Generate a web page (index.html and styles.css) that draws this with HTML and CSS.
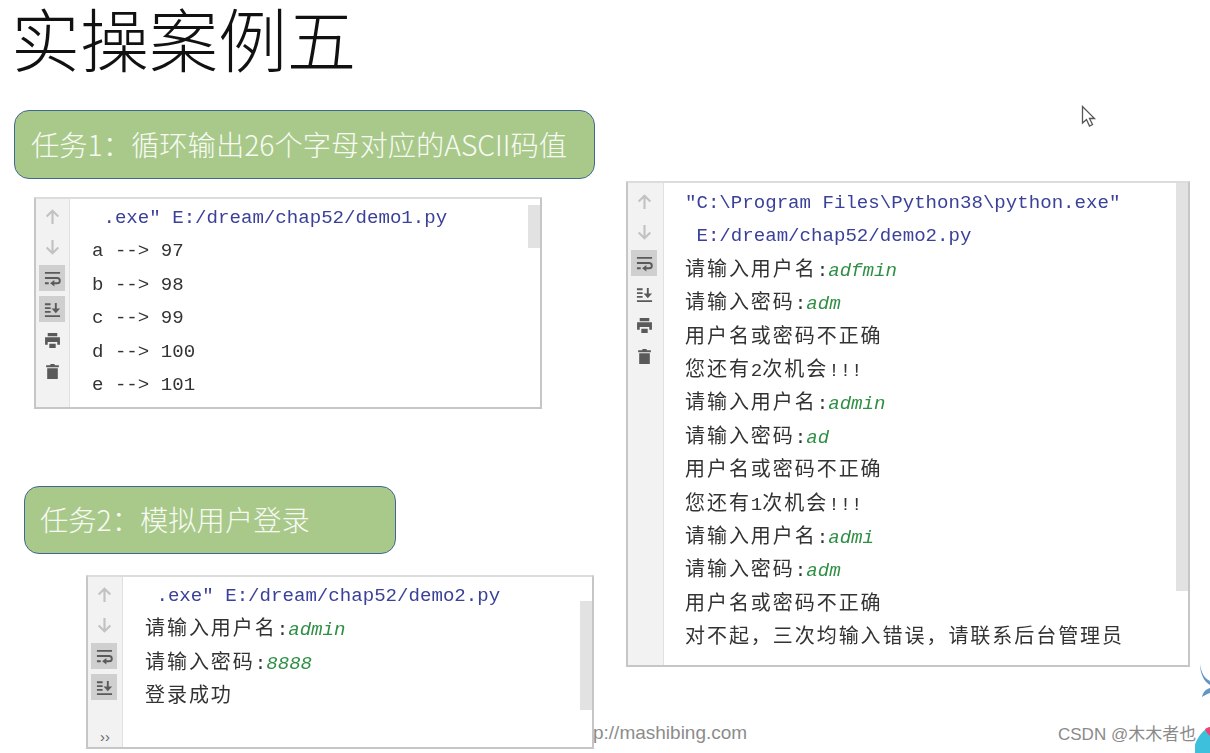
FILE: index.html
```html
<!DOCTYPE html>
<html lang="zh-CN">
<head>
<meta charset="utf-8">
<title>实操案例五</title>
<link rel="stylesheet" href="styles.css">
</head>
<body>
<svg class="defs" width="0" height="0" aria-hidden="true">
  <symbol id="i-up" viewBox="0 0 16 16"><path d="M8 15V3M2.500 8 8 2.500 13.500 8" fill="none" stroke="currentColor" stroke-width="2"/></symbol>
  <symbol id="i-down" viewBox="0 0 16 16"><path d="M8 1v12M2.500 8 8 13.500 13.500 8" fill="none" stroke="currentColor" stroke-width="2"/></symbol>
  <symbol id="i-wrap" viewBox="0 0 18 16"><path d="M1 2h16M1 7.500h13a2.700 2.700 0 0 1 0 5.500H9M1 13h4" fill="none" stroke="currentColor" stroke-width="2"/><path d="M11 9.500v7L6.500 13z" fill="currentColor"/></symbol>
  <symbol id="i-end" viewBox="0 0 18 16"><path d="M1 2.500h6M1 6.500h6M1 10.500h6M1 15h16M12.500 1v7" fill="none" stroke="currentColor" stroke-width="2"/><path d="M8 7h9l-4.500 5z" fill="currentColor"/></symbol>
  <symbol id="i-print" viewBox="0 0 16 16"><path d="M3.500 1h9v3h-9zM1 5h14v7h-2.500V9.500h-9V12H1zM5 11h6v4H5z" fill="currentColor"/></symbol>
  <symbol id="i-trash" viewBox="0 0 16 16"><path d="M6 1h4v1h4v2H2V2h4zM3 5h10v10H3z" fill="currentColor"/></symbol>
</svg>

<main class="slide">
  <h1 class="title">实操案例五</h1>

  <div class="pill pill-one">任务1：循环输出26个字母对应的ASCII码值</div>
  <div class="pill pill-two">任务2：模拟用户登录</div>

  <section class="console console-one">
    <div class="side">
      <span class="btn"><svg class="ic"><use href="#i-up"/></svg></span>
      <span class="btn"><svg class="ic"><use href="#i-down"/></svg></span>
      <span class="btn on"><svg class="ic dark"><use href="#i-wrap"/></svg></span>
      <span class="btn on"><svg class="ic dark"><use href="#i-end"/></svg></span>
      <span class="btn"><svg class="ic dark"><use href="#i-print"/></svg></span>
      <span class="btn"><svg class="ic dark"><use href="#i-trash"/></svg></span>
    </div>
    <div class="out">
      <div class="line cmd"> .exe" E:/dream/chap52/demo1.py</div>
      <div class="line">a --&gt; 97</div>
      <div class="line">b --&gt; 98</div>
      <div class="line">c --&gt; 99</div>
      <div class="line">d --&gt; 100</div>
      <div class="line">e --&gt; 101</div>
    </div>
    <div class="thumb thumb-one"></div>
  </section>

  <section class="console console-two">
    <div class="side">
      <span class="btn"><svg class="ic"><use href="#i-up"/></svg></span>
      <span class="btn"><svg class="ic"><use href="#i-down"/></svg></span>
      <span class="btn on"><svg class="ic dark"><use href="#i-wrap"/></svg></span>
      <span class="btn on"><svg class="ic dark"><use href="#i-end"/></svg></span>
      <span class="more">››</span>
    </div>
    <div class="out">
      <div class="line cmd"> .exe" E:/dream/chap52/demo2.py</div>
      <div class="line"><span class="zh">请输入用户名</span>:<i class="in">admin</i></div>
      <div class="line"><span class="zh">请输入密码</span>:<i class="in">8888</i></div>
      <div class="line"><span class="zh">登录成功</span></div>
    </div>
    <div class="thumb thumb-two"></div>
  </section>

  <section class="console console-three">
    <div class="side">
      <span class="btn"><svg class="ic"><use href="#i-up"/></svg></span>
      <span class="btn"><svg class="ic"><use href="#i-down"/></svg></span>
      <span class="btn on"><svg class="ic dark"><use href="#i-wrap"/></svg></span>
      <span class="btn"><svg class="ic dark"><use href="#i-end"/></svg></span>
      <span class="btn"><svg class="ic dark"><use href="#i-print"/></svg></span>
      <span class="btn"><svg class="ic dark"><use href="#i-trash"/></svg></span>
    </div>
    <div class="out">
      <div class="line cmd">"C:\Program Files\Python38\python.exe"</div>
      <div class="line cmd"> E:/dream/chap52/demo2.py</div>
      <div class="line"><span class="zh">请输入用户名</span>:<i class="in">adfmin</i></div>
      <div class="line"><span class="zh">请输入密码</span>:<i class="in">adm</i></div>
      <div class="line"><span class="zh">用户名或密码不正确</span></div>
      <div class="line"><span class="zh">您还有</span>2<span class="zh">次机会</span>!!!</div>
      <div class="line"><span class="zh">请输入用户名</span>:<i class="in">admin</i></div>
      <div class="line"><span class="zh">请输入密码</span>:<i class="in">ad</i></div>
      <div class="line"><span class="zh">用户名或密码不正确</span></div>
      <div class="line"><span class="zh">您还有</span>1<span class="zh">次机会</span>!!!</div>
      <div class="line"><span class="zh">请输入用户名</span>:<i class="in">admi</i></div>
      <div class="line"><span class="zh">请输入密码</span>:<i class="in">adm</i></div>
      <div class="line"><span class="zh">用户名或密码不正确</span></div>
      <div class="line"><span class="zh">对不起，三次均输入错误，请联系后台管理员</span></div>
    </div>
    <div class="thumb thumb-three"></div>
  </section>

  <div class="url">p://mashibing.com</div>
  <div class="credit">CSDN @木木者也</div>

  <svg class="cursor" viewBox="0 0 16 24" aria-hidden="true"><path d="M1.500 1.500v16.500l4-3.500 3 6.500 3-1.500-3-6h5z" fill="#fff" stroke="#555" stroke-width="1.300"/></svg>
  <svg class="deco" viewBox="0 0 15 90" aria-hidden="true">
    <path d="M5 1c1 8 4 14 10 17v4C9 19 5 10 5 1zM15 25c-4 1-7 4-8 9 3-2 5-3 8-4z" fill="#6296c4"/>
    <path d="M-2 90c2-13 8-22 17-26v26z" fill="#3cc0dc"/>
    <path d="M10 66c2-1 3-2 5-2v9c-2-2-4-4-5-7z" fill="#f0436e"/>
  </svg>
</main>
</body>
</html>
```
FILE: styles.css
```css
html, body {
  margin: 0;
  padding: 0;
  background: #fff;
}

.defs {
  position: absolute;
}

.slide {
  position: relative;
  width: 1210px;
  height: 753px;
  overflow: hidden;
  background: #fff;
  font-family: "Noto Sans CJK SC", sans-serif;
}

.title {
  margin: 0;
  padding: 0 0 0 11px;
  font-size: 69px;
  font-weight: 300;
  line-height: 74px;
  color: #111;
}

.pill {
  position: absolute;
  box-sizing: border-box;
  display: flex;
  align-items: center;
  border: 1.500px solid #41698f;
  background: #a9c98b;
  color: #f8fbf4;
  white-space: nowrap;
  font-size: 28.300px;
  font-weight: 300;
}

.pill-one {
  left: 14px;
  top: 110px;
  width: 581px;
  height: 69px;
  padding: 0 0 2px 16px;
  border-radius: 15px;
}

.pill-two {
  left: 24px;
  top: 486px;
  width: 372px;
  height: 68px;
  padding: 0 0 4px 15px;
  border-radius: 15px;
}

.console {
  position: absolute;
  box-sizing: border-box;
  display: flex;
  border: 2px solid #c6c6c6;
  border-top-color: #dcdcdc;
  background: #fff;
}

.console-one {
  left: 34px;
  top: 197px;
  width: 508px;
  height: 212px;
}

.console-two {
  left: 86px;
  top: 575px;
  width: 508px;
  height: 174px;
}

.console-three {
  left: 626px;
  top: 181px;
  width: 564px;
  height: 486px;
}

.side {
  flex: none;
  position: relative;
  box-sizing: border-box;
  width: 34px;
  padding: 4px 0 0 3px;
  background: #f2f2f2;
  border-right: 1px solid #e0e0e0;
  display: flex;
  flex-direction: column;
  gap: 5px;
}

.console-two .side {
  width: 35px;
}

.console-three .side {
  width: 36px;
  padding-top: 5px;
}

.btn {
  display: flex;
  align-items: center;
  justify-content: center;
  width: 26px;
  height: 26px;
  flex: none;
}

.btn.on {
  background: #cfcfcf;
}

.ic {
  width: 17px;
  height: 17px;
  color: #c2c2c2;
}

.ic.dark {
  color: #5a5a5a;
}

.more {
  position: absolute;
  left: 12px;
  bottom: 0;
  font-family: "Liberation Sans", sans-serif;
  font-size: 15px;
  line-height: 20px;
  color: #666;
}

.out {
  flex: 1;
  padding: 3px 0 0 22px;
  font-family: "Liberation Mono", "Noto Sans CJK SC", monospace;
  font-size: 19.100px;
  color: #333;
  filter: blur(0.3px);
}

.console-three .out {
  padding: 4px 0 0 21px;
}

.line {
  height: 33.400px;
  line-height: 33.400px;
  white-space: pre;
}

.cmd {
  color: #3b4199;
}

.zh {
  font-size: 20px;
  letter-spacing: 1.950px;
}

.in {
  color: #2f8f45;
  font-style: italic;
}

.thumb {
  position: absolute;
  right: 0;
  width: 12px;
  background: #e2e2e2;
}

.thumb-one {
  top: 6px;
  height: 43px;
}

.thumb-two {
  top: 24px;
  height: 109px;
}

.thumb-three {
  top: 0;
  height: 408px;
}

.url {
  position: absolute;
  left: 593px;
  top: 720px;
  font-family: "Liberation Sans", sans-serif;
  font-size: 19px;
  line-height: 26px;
  color: #8c8c8c;
}

.credit {
  position: absolute;
  left: 1058px;
  top: 724px;
  font-family: "Liberation Sans", "Noto Sans CJK SC", sans-serif;
  font-size: 17px;
  line-height: 22px;
  color: #8a8a8a;
  white-space: nowrap;
}

.cursor {
  position: absolute;
  left: 1081px;
  top: 105px;
  width: 16px;
  height: 24px;
}

.deco {
  position: absolute;
  left: 1195px;
  top: 663px;
  width: 15px;
  height: 90px;
}
```
